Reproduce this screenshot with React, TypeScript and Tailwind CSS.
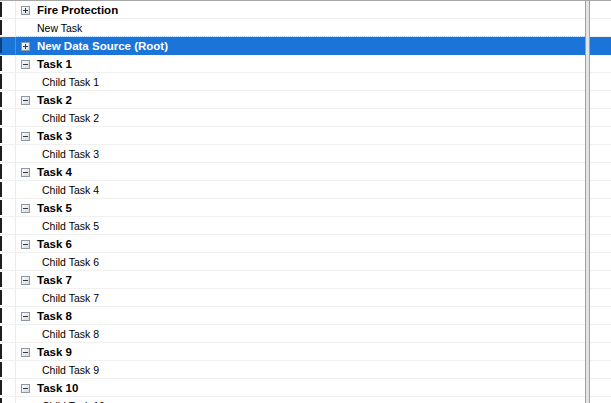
import React from 'react';

interface Row {
  id: string;
  label: string;
  bold: boolean;
  toggle: 'plus' | 'minus' | null;
  indent: boolean;
  selected?: boolean;
}

const ROWS: Row[] = [
  { id: 'fire', label: 'Fire Protection', bold: true, toggle: 'plus', indent: false },
  { id: 'new', label: 'New Task', bold: false, toggle: null, indent: false },
  { id: 'root', label: 'New Data Source (Root)', bold: true, toggle: 'plus', indent: false, selected: true },
];

for (let i = 1; i <= 10; i++) {
  ROWS.push({ id: `t${i}`, label: `Task ${i}`, bold: true, toggle: 'minus', indent: false });
  ROWS.push({ id: `c${i}`, label: `Child Task ${i}`, bold: false, toggle: null, indent: true });
}

function ToggleBox({ kind }: { kind: 'plus' | 'minus' }) {
  return (
    <svg width="9" height="9" viewBox="0 0 9 9" className="shrink-0">
      <defs>
        <linearGradient id="tb" x1="0" y1="0" x2="1" y2="1">
          <stop offset="0" stopColor="#ffffff" />
          <stop offset="1" stopColor="#d8d6cc" />
        </linearGradient>
      </defs>
      <rect x="0.5" y="0.5" width="8" height="8" fill="url(#tb)" stroke="#8c98a6" />
      <line x1="2" y1="4.5" x2="7" y2="4.5" stroke="#2a3a5a" />
      {kind === 'plus' && <line x1="4.5" y1="2" x2="4.5" y2="7" stroke="#2a3a5a" />}
    </svg>
  );
}

export default function App() {
  return (
    <div className="flex h-[403px] w-[611px] overflow-hidden bg-white border-t border-[#a7a7a7] font-['Liberation_Sans',Arial,sans-serif] text-black select-none">
      {/* Tree */}
      <div className="w-[585px] shrink-0 flex flex-col">
        {ROWS.map(row => (
          <div
            key={row.id}
            className={`h-[18px] shrink-0 flex border-b ${row.selected ? 'bg-[#1b74d8] border-[#1b74d8]' : 'border-[#f0f0f0]'}`}
          >
            <div className={`w-[16px] shrink-0 flex items-stretch border-r ${row.selected ? 'border-[#4d93e0]' : 'border-[#ececec]'}`}>
              <div className={`w-[2px] my-[1px] ${row.selected ? 'bg-[#0d3f7a]' : 'bg-[#1e1e1e]'}`} />
            </div>
            <div className={`flex-1 flex items-center pt-[2px] ${row.selected ? 'border-t border-dotted border-[#a9cdf3] -mt-px' : ''}`}>
              <div className="w-[5px] shrink-0" />
              {row.toggle ? <ToggleBox kind={row.toggle} /> : <div className="w-[9px] shrink-0" />}
              <span
                className={`whitespace-nowrap leading-none ${row.indent ? 'ml-[12px]' : 'ml-[7px]'} ${
                  row.bold ? 'font-bold text-[11.5px]' : 'text-[10.5px]'
                } ${row.selected ? 'text-white' : 'text-black'}`}
              >
                {row.label}
              </span>
            </div>
          </div>
        ))}
      </div>

      {/* Splitter */}
      <div className="w-[5px] shrink-0 bg-[#e4e4e4] border-x border-[#a0a0a0]" />

      {/* Right grid */}
      <div className="flex-1 flex flex-col">
        {ROWS.map(row => (
          <div
            key={row.id}
            className={`h-[18px] shrink-0 border-b ${row.selected ? 'bg-[#1b74d8] border-[#1b74d8]' : 'border-[#f0f0f0]'}`}
          />
        ))}
      </div>
    </div>
  );
}
